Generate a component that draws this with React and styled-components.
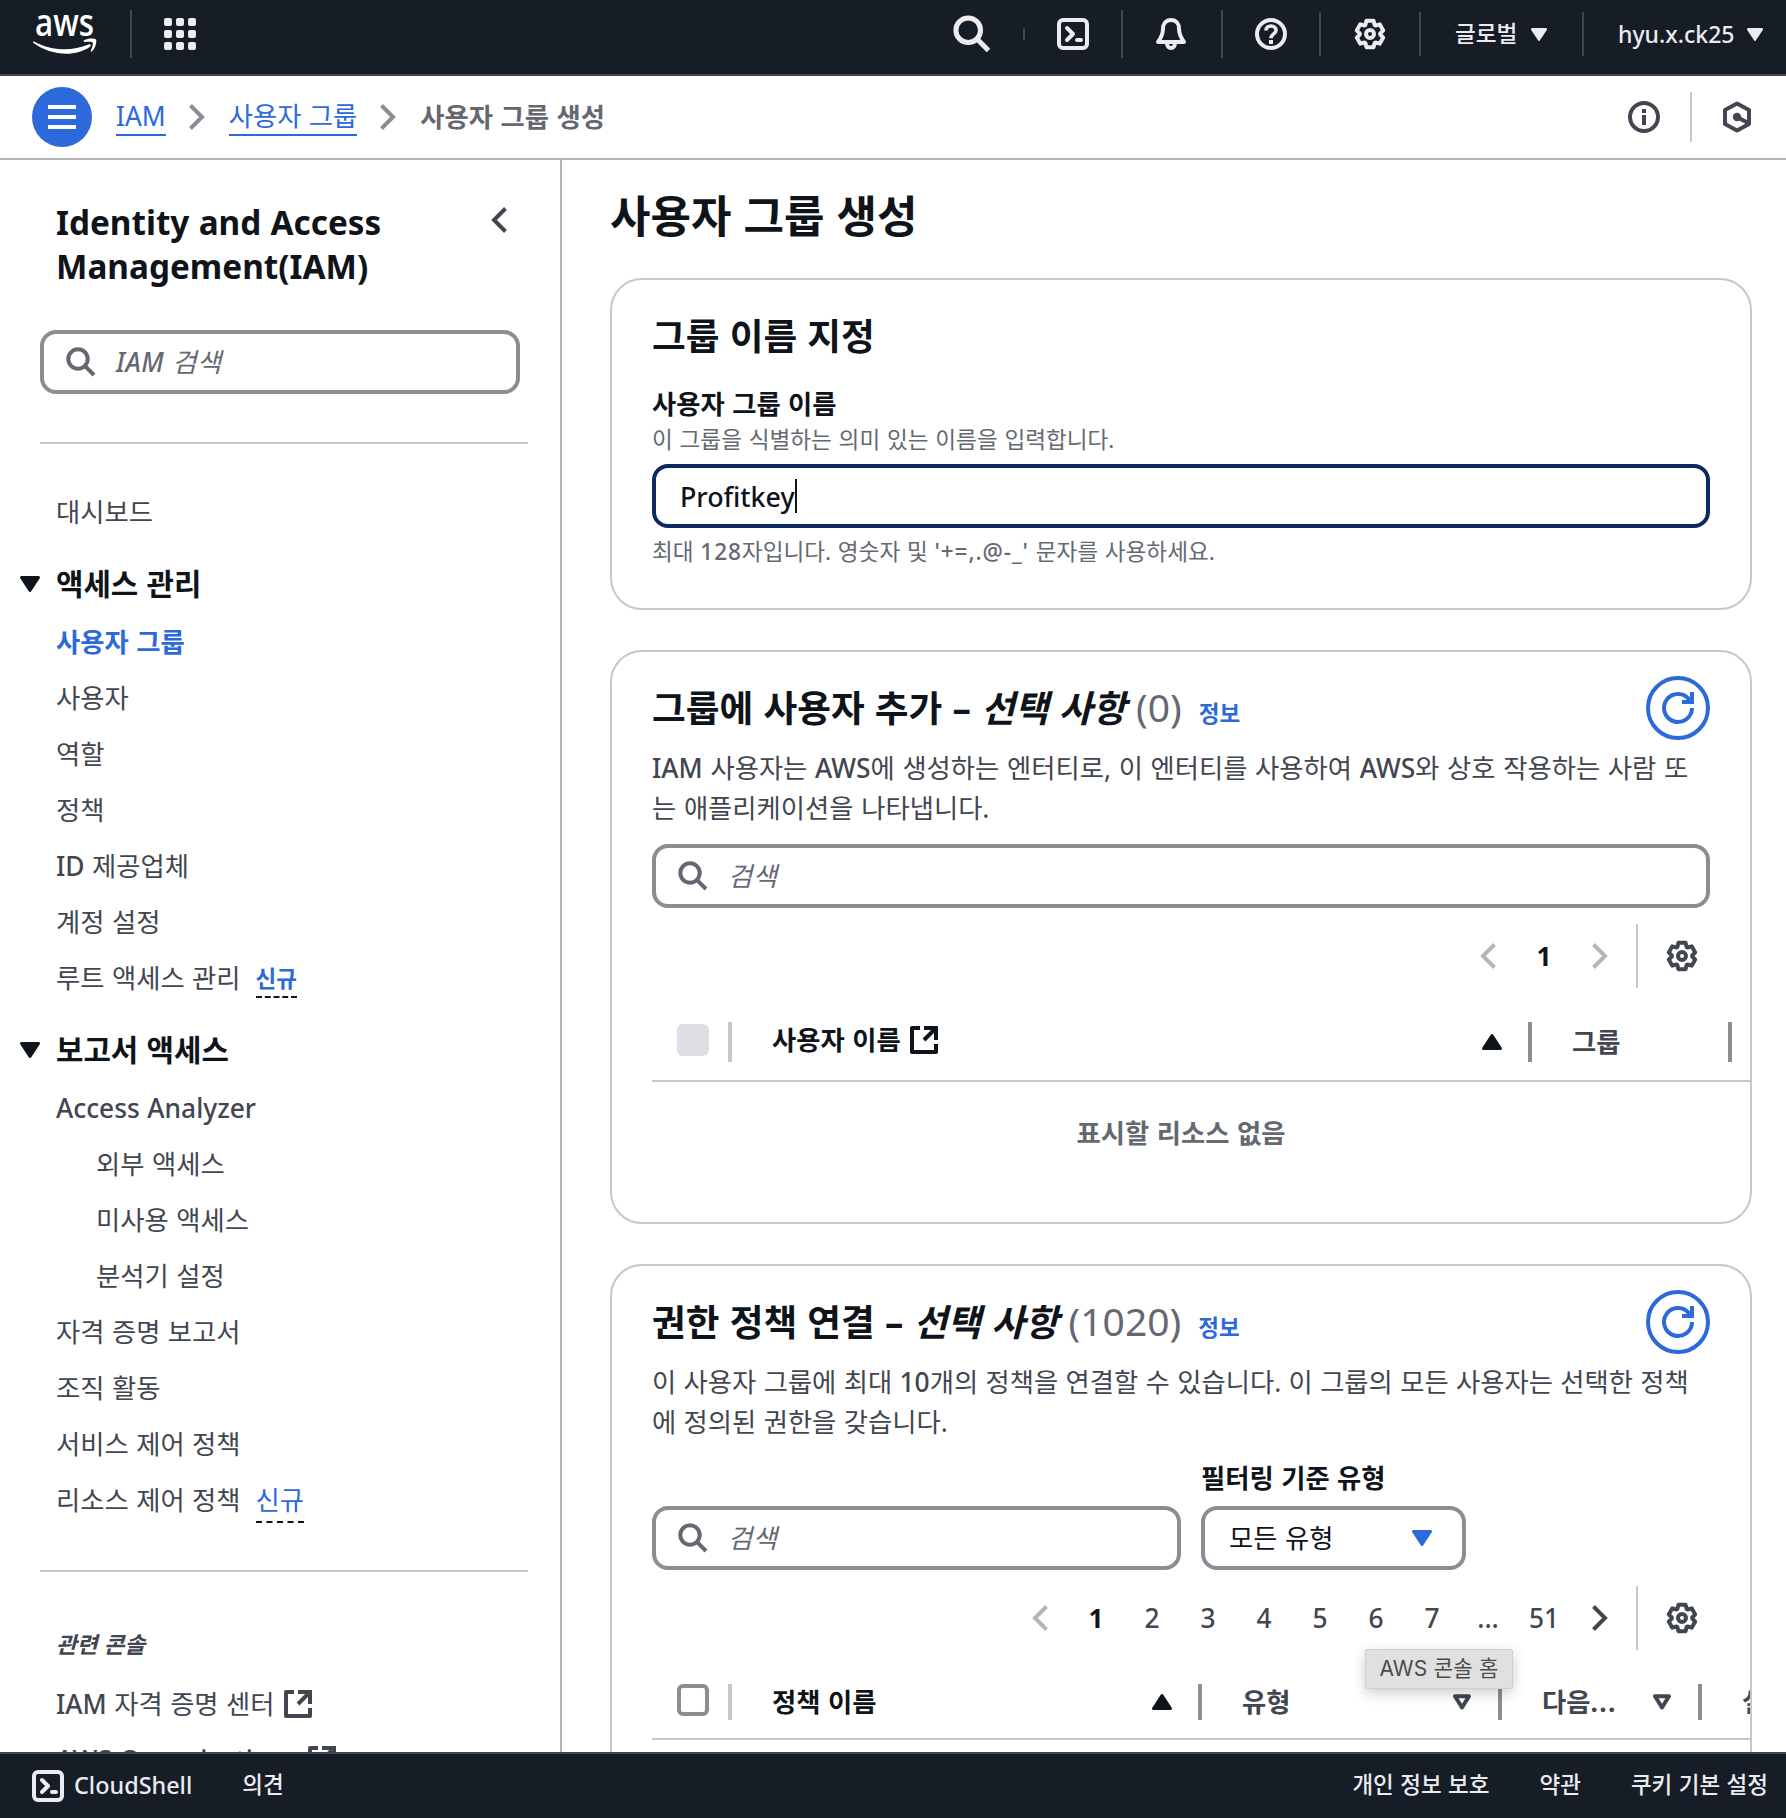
import React from "react";
import styled, { createGlobalStyle, css } from "styled-components";

const ink = "#0f141a";
const slate = "#424650";
const muted = "#656871";
const blue = "#2c69da";
const line = "#c6c6cd";
const control = "#8c8c94";
const dark = "#161d26";

const Global = createGlobalStyle`
  *, *::before, *::after { box-sizing: border-box; }
  html, body { margin: 0; padding: 0; }
  body {
    font-family: "Noto Sans", "Noto Sans CJK KR", sans-serif;
    font-size: 26.35px;
    line-height: 40px;
    word-spacing: 0.6px;
    color: ${slate};
    background: #fff;
  }
  h1, h2, p, ul { margin: 0; padding: 0; font-weight: inherit; font-size: inherit; }
  ul { list-style: none; }
  a { color: inherit; text-decoration: none; }
  svg { display: block; flex: none; overflow: visible; }
`;

/* ---------- icons ---------- */

const Svg = styled.svg.attrs((p) => ({
  viewBox: p.viewBox || "0 0 32 32",
  fill: "none",
  stroke: "currentColor",
  strokeWidth: p.strokeWidth || 4,
}))`
  width: ${(p) => p.$w || 32}px;
  height: ${(p) => p.$h || p.$w || 32}px;
`;

const gearPath = (() => {
  const pts = [];
  for (let i = 0; i < 6; i += 1) {
    [[-27, 10.2], [-15, 13.7], [15, 13.7], [27, 10.2]].forEach(([d, r]) => {
      const a = ((i * 60 + d - 90) * Math.PI) / 180;
      pts.push(`${(16 + r * Math.cos(a)).toFixed(2)} ${(16 + r * Math.sin(a)).toFixed(2)}`);
    });
  }
  return `M${pts.join("L")}Z`;
})();

const GearIcon = () => (
  <Svg strokeLinejoin="round">
    <path d={gearPath} />
    <circle cx="16" cy="16" r="4" />
  </Svg>
);
const SearchIcon = ({ size = 30 }) => (
  <Svg $w={size} viewBox="0 0 30 30" strokeWidth={4}>
    <circle cx="12" cy="12" r="9.7" />
    <path d="M18.6 18.6 28 28" />
  </Svg>
);
const ShellIcon = () => (
  <Svg strokeLinecap="round" strokeLinejoin="round">
    <rect x="2" y="2" width="28" height="28" rx="4" />
    <path d="M10 10l6 6-6 6M20 22h4" />
  </Svg>
);
const BellIcon = () => (
  <Svg strokeLinejoin="round">
    <path d="M16 2c-5.500 0-8 4.300-8 8.500 0 6-1.700 9-5 13.500h26c-3.300-4.500-5-7.500-5-13.500C24 6.300 21.500 2 16 2z" />
    <path d="M12 25c0 3 1.800 5 4 5s4-2 4-5" />
  </Svg>
);
const HelpIcon = () => (
  <Svg>
    <circle cx="16" cy="16" r="14" />
    <path d="M11 12.500C11 9.600 13.200 8 16 8s5 1.700 5 4.300c0 3.700-5 3.700-5 8" strokeWidth="3.600" />
    <path d="M14 24h4" />
  </Svg>
);
const InfoIcon = () => (
  <Svg>
    <circle cx="16" cy="16" r="14" />
    <path d="M16 14v10M16 8v4" />
  </Svg>
);
const HexIcon = () => (
  <Svg strokeLinejoin="round">
    <path d="M16 2.500 28 9v14l-12 6.500L4 23V9z" />
    <circle cx="16" cy="16" r="4.200" fill="currentColor" stroke="none" />
    <path d="M17 16.500 28 22.500" />
  </Svg>
);
const RefreshIcon = () => (
  <Svg>
    <path d="M30 16A14 14 0 1 1 27.500 8" />
    <path d="M30 0v10H20" />
  </Svg>
);
const ExternalIcon = () => (
  <Svg $w={28} viewBox="0 0 28 28">
    <path d="M10 2H2v24h24v-8" strokeLinejoin="round" />
    <path d="M14 2h12v12M26 2 14 14" />
  </Svg>
);
const Chevron = ({ dir }) => (
  <Svg $w={16} $h={26} viewBox="0 0 16 26">
    <path d={dir === "left" ? "M14.500 1.500 3 13l11.500 11.500" : "M1.500 1.500 13 13 1.500 24.500"} />
  </Svg>
);
const Triangle = ({ up, hollow, w = 20, h = 16 }) => (
  <Svg $w={w} $h={h} viewBox="0 0 20 16" strokeLinejoin="round" strokeWidth={hollow ? 4 : 3}>
    <path
      d={up ? "M10 1.500 18.500 14.500h-17z" : hollow ? "M10 13.500 3 2.200h14z" : "M10 14.500 1.500 1.500h17z"}
      fill={hollow ? "none" : "currentColor"}
    />
  </Svg>
);
const GridIcon = () => (
  <Svg>
    {[0, 12, 24].map((y) =>
      [0, 12, 24].map((x) => (
        <rect key={`${x}-${y}`} x={x} y={y} width="8" height="8" rx="2" fill="currentColor" stroke="none" />
      ))
    )}
  </Svg>
);
const LogoText = styled.text`
  font: 600 37px "Open Sans", sans-serif;
  fill: #fff;
  stroke: none;
`;
const AwsLogo = () => (
  <Svg $w={66} $h={54} viewBox="0 -12 66 54">
    <LogoText x="2" y="22" textLength="59" lengthAdjust="spacingAndGlyphs">aws</LogoText>
    <g fill="#fff" stroke="none">
      <path d="M1 27.500C17 36.500 38 38 55.500 30.500c2-.800 3.200 1 1.500 2.200C42 43.500 17 41.500.300 28.800c-.800-.900 0-1.700.700-1.300z" />
      <path d="M51 26.300c4-2.300 10.500-2.200 11.800-1 1.300 1.400.2 8.700-4 12.200-.7.500-1.400.2-1-.600 1-2.400 2.600-7.200 1.900-8.300-.800-1.100-5.500-.700-8-.500-.9 0-1.500-1-.7-1.800z" />
    </g>
  </Svg>
);

/* ---------- shell ---------- */

const Page = styled.div`
  display: flex;
  flex-direction: column;
  width: 1786px;
  height: 1818px;
  overflow: hidden;
`;

const TopBar = styled.header`
  display: flex;
  align-items: center;
  height: 76px;
  flex: none;
  padding: 0 23px 6px 33px;
  background: ${dark};
  border-bottom: 2px solid ${slate};
  color: #ebebf0;
`;
const LogoLink = styled.a`
  padding-bottom: 11px;
`;
const Gap = styled.div`
  width: ${(p) => p.$w}px;
  flex: none;
`;
const Spacer = styled.div`
  flex: 1;
`;
const Rule = styled.div`
  flex: none;
  width: 2px;
  height: ${(p) => p.$h}px;
  background: ${(p) => p.$c || slate};
`;
const TopSlot = styled.div`
  display: flex;
  justify-content: center;
  width: ${(p) => p.$w}px;
  padding-right: ${(p) => p.$r || 0}px;
`;
const TopMenu = styled.div`
  display: flex;
  align-items: center;
  justify-content: space-between;
  width: ${(p) => p.$w}px;
  margin-left: 34px;
  font-size: ${(p) => p.$fs}px;
  font-weight: 500;
  white-space: nowrap;
`;

const CrumbBar = styled.nav`
  display: flex;
  align-items: center;
  flex: none;
  height: 84px;
  padding: 0 33px 0 32px;
  border-bottom: 2px solid #b4b4bb;
  color: ${slate};
`;
const MenuButton = styled.div`
  display: flex;
  flex-direction: column;
  align-items: center;
  justify-content: center;
  gap: 6px;
  width: 60px;
  height: 60px;
  margin-right: 24px;
  border-radius: 50%;
  background: ${blue};
`;
const MenuLine = styled.span`
  width: 28px;
  height: 4px;
  background: #fff;
`;
const Crumb = styled.a`
  height: 36px;
  line-height: 33px;
  margin-top: 2px;
  border-bottom: 2px solid ${blue};
  color: ${blue};
`;
const CrumbSep = styled.span`
  margin: 0 24px 0 23px;
  color: ${control};
`;
const CrumbCurrent = styled.span`
  font-weight: 700;
  color: ${muted};
`;

const Body = styled.div`
  display: flex;
  flex: 1;
  min-height: 0;
`;

const Latin = styled.span`
  font-weight: 500;
`;

/* ---------- sidebar ---------- */

const Side = styled.aside`
  flex: none;
  width: 562px;
  height: 1592px;
  overflow: hidden;
  border-right: 2px solid #b4b4bb;
`;
const SideHead = styled.div`
  display: flex;
  justify-content: space-between;
  align-items: flex-start;
  padding: 40px 53px 0 56px;
`;
const SideTitle = styled.h2`
  width: 360px;
  font-size: 33.3px;
  font-weight: 700;
  line-height: 44px;
  color: ${ink};
`;
const SideCollapse = styled.span`
  padding-top: 7px;
`;
const Field = styled.div`
  display: flex;
  align-items: center;
  width: ${(p) => (p.$w ? `${p.$w}px` : "auto")};
  height: 64px;
  margin-top: ${(p) => (p.$mt || 0)}px;
  padding: ${(p) => (p.$text ? "1px 24px 0 24px" : "0 24px 0 22px")};
  border: 4px solid ${(p) => (p.$focus ? "#0b2a63" : control)};
  border-radius: 16px;
  color: ${(p) => (p.$text ? ink : muted)};
  font-size: ${(p) => (p.$text ? 26.8 : 26.35)}px;
  font-weight: ${(p) => (p.$text ? 500 : 400)};
`;
const Placeholder = styled.span`
  margin-left: 20px;
  font-style: italic;
  letter-spacing: 0.5px;
`;
const SideSearch = styled.div`
  width: 480px;
  margin: 42px 0 48px 40px;
`;
const SideRule = styled.div`
  width: 488px;
  height: 2px;
  margin: ${(p) => p.$mt || 0}px 0 ${(p) => p.$mb || 0}px 40px;
  background: ${line};
`;
const NavItem = styled.li`
  display: flex;
  align-items: center;
  height: 56px;
  padding-left: ${(p) => (p.$nested ? 96 : 56)}px;
  letter-spacing: ${(p) => p.$ls || 0}px;
  font-weight: ${(p) => (p.$active ? 700 : p.$latin ? 500 : 400)};
  white-space: pre;
  ${(p) => p.$active && css`color: ${blue};`}
`;
const NavGroup = styled.li`
  display: flex;
  align-items: center;
  gap: 16px;
  height: 56px;
  margin: 16px 0 2px;
  padding-left: 20px;
  font-size: 29.8px;
  font-weight: 700;
  color: ${ink};
`;
const Badge = styled.span`
  margin: ${(p) => (p.$small ? 3 : 5)}px 0 0 15px;
  padding-bottom: ${(p) => (p.$small ? 1 : 3)}px;
  font-size: ${(p) => (p.$small ? 22.5 : 26.35)}px;
  font-weight: ${(p) => (p.$small ? 700 : 400)};
  line-height: ${(p) => (p.$small ? 33 : 36)}px;
  border-bottom: 2px dashed ${ink};
  color: ${blue};
`;
const SideCaption = styled.div`
  margin: 45px 0 3px;
  padding-left: 56px;
  font-size: 22.5px;
  font-style: italic;
  font-weight: 700;
  line-height: 56px;
`;
const ExtSlot = styled.span`
  margin-left: 9px;
`;

/* ---------- main ---------- */

const Main = styled.main`
  position: relative;
  flex: 1;
  min-width: 0;
  height: 1592px;
  padding: 28px 34px 0 48px;
  overflow: hidden;
`;
const PageTitle = styled.h1`
  margin-bottom: 34px;
  font-size: 44px;
  font-weight: 700;
  line-height: 56px;
  color: ${ink};
`;
const Card = styled.section`
  margin-bottom: 40px;
  padding: ${(p) => p.$pad};
  height: ${(p) => (p.$h ? `${p.$h}px` : "auto")};
  border: 2px solid ${line};
  border-radius: 32px;
  overflow: hidden;
`;
const CardTitle = styled.h2`
  font-size: 36.7px;
  font-weight: 700;
  line-height: ${(p) => p.$lh || 62}px;
  color: ${ink};
  white-space: nowrap;
`;
const Counter = styled.span`
  margin-left: 10px;
  font-size: 39px;
  font-weight: 400;
  color: ${muted};
`;
const InfoLink = styled.a`
  margin-left: 17px;
  font-size: 22.5px;
  color: ${blue};
`;
const CardHead = styled.div`
  display: flex;
  justify-content: space-between;
  height: 66px;
`;
const RoundButton = styled.div`
  display: flex;
  align-items: center;
  justify-content: center;
  width: 64px;
  height: 64px;
  border: 4px solid ${blue};
  border-radius: 50%;
  color: ${blue};
`;
const Desc = styled.p`
  margin: 6px 0 16px;
  word-spacing: ${(p) => p.$ws}px;
  white-space: nowrap;
`;
const Label = styled.div`
  margin: ${(p) => p.$m || 0};
  font-weight: 700;
  color: ${ink};
`;
const Hint = styled.p`
  margin: ${(p) => p.$m || 0};
  font-size: 22.6px;
  line-height: 32px;
  word-spacing: 0.9px;
  color: ${muted};
`;
const Wide = styled.span`
  font-weight: 500;
  letter-spacing: 0.9px;
`;
const Caret = styled.span`
  width: 2px;
  height: 34px;
  margin-bottom: 2px;
  background: ${ink};
`;
const Filters = styled.div`
  display: flex;
  align-items: flex-end;
  gap: 20px;
`;
const SelectBox = styled.div`
  display: flex;
  align-items: center;
  justify-content: space-between;
  width: 265px;
  height: 64px;
  padding: 0 30px 0 24px;
  border: 4px solid ${control};
  border-radius: 16px;
  color: ${ink};
`;
const SelectArrow = styled.span`
  color: ${blue};
`;
const Pager = styled.div`
  display: flex;
  align-items: center;
  justify-content: flex-end;
  height: 64px;
  margin: 16px 0;
  padding-right: 12px;
`;
const PageBtn = styled.span`
  display: flex;
  justify-content: center;
  width: 56px;
  color: ${(p) => (p.$off ? "#b4b4bb" : p.$on ? ink : slate)};
  font-weight: ${(p) => (p.$on ? 700 : 500)};
`;
const PagerEnd = styled.span`
  display: flex;
  align-items: center;
  gap: 28px;
  margin-left: 8px;
`;
const HeadRow = styled.div`
  display: flex;
  align-items: center;
  height: ${(p) => p.$h + 2}px;
  margin-right: -40px;
  border-bottom: 2px solid ${line};
  overflow: hidden;
`;
const HeadCell = styled.div`
  display: flex;
  align-items: center;
  justify-content: space-between;
  flex: none;
  width: ${(p) => p.$w}px;
  height: ${(p) => p.$h}px;
  padding: 0 ${(p) => (p.$check ? "19px 0 25px" : "26px 0 40px")};
  border-right: 4px solid ${(p) => (p.$check ? line : p.$last ? "transparent" : control)};
  font-weight: 700;
  color: ${(p) => (p.$sorted ? ink : slate)};
  white-space: nowrap;
`;
const HeadLink = styled.span`
  display: flex;
  align-items: center;
  gap: 9px;
  padding-bottom: 4px;
`;
const Ellipsis = styled.span`
  letter-spacing: 1.4px;
`;
const Checkbox = styled.span`
  width: 32px;
  height: 32px;
  margin-bottom: 4px;
  border-radius: 6px;
  ${(p) => (p.$disabled ? css`background: #dedee3;` : css`border: 4px solid ${control};`)}
`;
const Empty = styled.div`
  padding: 31px 0 69px;
  text-align: center;
  font-weight: 700;
  color: ${muted};
`;
const Tooltip = styled.div`
  position: absolute;
  left: 803px;
  top: 1489px;
  width: 148px;
  height: 40px;
  line-height: 37px;
  border: 1px solid #d0d0d0;
  border-radius: 2px;
  background: #e0e0e0;
  box-shadow: 0 4px 14px rgba(0, 0, 0, 0.2);
  text-align: center;
  font-family: Inter, "Noto Sans CJK KR", sans-serif;
  font-size: 21.1px;
  color: #4b4b4b;
  white-space: nowrap;
`;

const Footer = styled.footer`
  display: flex;
  align-items: center;
  flex: none;
  height: 66px;
  padding: 0 18px 0 32px;
  border-top: 2px solid ${slate};
  background: ${dark};
  color: #ebebf0;
`;
const FooterText = styled.span`
  margin-left: ${(p) => p.$ml || 0}px;
  padding-bottom: ${(p) => p.$pb || 0}px;
  font-size: ${(p) => p.$fs || 22.5}px;
  font-weight: 500;
  white-space: nowrap;
`;

function Nav() {
  return (
    <Side>
      <SideHead>
        <SideTitle>Identity and Access Management(IAM)</SideTitle>
        <SideCollapse><Chevron dir="left" /></SideCollapse>
      </SideHead>
      <SideSearch>
        <Field><SearchIcon /><Placeholder><Latin>IAM</Latin> 검색</Placeholder></Field>
      </SideSearch>
      <SideRule $mb={40} />
      <ul>
        <NavItem>대시보드</NavItem>
        <NavGroup><Triangle />액세스 관리</NavGroup>
        <NavItem $active>사용자 그룹</NavItem>
        <NavItem>사용자</NavItem>
        <NavItem>역할</NavItem>
        <NavItem>정책</NavItem>
        <NavItem><span><Latin>ID</Latin> 제공업체</span></NavItem>
        <NavItem>계정 설정</NavItem>
        <NavItem>루트 액세스 관리<Badge $small>신규</Badge></NavItem>
        <NavGroup><Triangle />보고서 액세스</NavGroup>
        <NavItem $latin>Access Analyzer</NavItem>
        <NavItem $nested>외부 액세스</NavItem>
        <NavItem $nested>미사용 액세스</NavItem>
        <NavItem $nested>분석기 설정</NavItem>
        <NavItem>자격 증명 보고서</NavItem>
        <NavItem>조직 활동</NavItem>
        <NavItem>서비스 제어 정책</NavItem>
        <NavItem>리소스 제어 정책<Badge>신규</Badge></NavItem>
      </ul>
      <SideRule $mt={42} />
      <SideCaption>관련 콘솔</SideCaption>
      <ul>
        <NavItem><span><Latin>IAM</Latin> 자격 증명 센터</span><ExtSlot><ExternalIcon /></ExtSlot></NavItem>
        <NavItem $latin $ls={0.2}>AWS Organizations<ExtSlot><ExternalIcon /></ExtSlot></NavItem>
      </ul>
    </Side>
  );
}

export default function App() {
  return (
    <Page>
      <Global />
      <TopBar>
        <LogoLink><AwsLogo /></LogoLink>
        <Gap $w={31} />
        <Rule $h={48} />
        <Gap $w={32} />
        <GridIcon />
        <Spacer />
        <SearchIcon size={38} />
        <Gap $w={32} />
        <Rule $h={12} />
        <TopSlot $w={96}><ShellIcon /></TopSlot>
        <Rule $h={48} />
        <TopSlot $w={98} $r={2}><BellIcon /></TopSlot>
        <Rule $h={48} />
        <TopSlot $w={96}><HelpIcon /></TopSlot>
        <Rule $h={44} />
        <TopSlot $w={98}><GearIcon /></TopSlot>
        <Rule $h={44} />
        <TopMenu $w={92} $fs={22.6}>글로벌<Triangle w={16} h={13} /></TopMenu>
        <Gap $w={35} />
        <Rule $h={44} />
        <TopMenu $w={145} $fs={23}>hyu.x.ck25<Triangle w={16} h={13} /></TopMenu>
      </TopBar>
      <CrumbBar>
        <MenuButton><MenuLine /><MenuLine /><MenuLine /></MenuButton>
        <Crumb>IAM</Crumb>
        <CrumbSep><Chevron /></CrumbSep>
        <Crumb>사용자 그룹</Crumb>
        <CrumbSep><Chevron /></CrumbSep>
        <CrumbCurrent>사용자 그룹 생성</CrumbCurrent>
        <Spacer />
        <InfoIcon />
        <Gap $w={30} />
        <Rule $h={50} $c={line} />
        <Gap $w={29} />
        <HexIcon />
      </CrumbBar>
      <Body>
        <Nav />
        <Main>
          <PageTitle>사용자 그룹 생성</PageTitle>
          <Card $pad="34px 40px 40px">
            <CardTitle $lh={44}>그룹 이름 지정</CardTitle>
            <Label $m="26px 0 0">사용자 그룹 이름</Label>
            <Hint>이 그룹을 식별하는 의미 있는 이름을 입력합니다.</Hint>
            <Field $focus $text $mt={8}>Profitkey<Caret /></Field>
            <Hint $m="8px 0 0">최대 <Wide>128</Wide>자입니다. 영숫자 및 <Wide>'+=,.@-_'</Wide> 문자를 사용하세요.</Hint>
          </Card>

          <Card $pad="24px 40px 0">
            <CardHead>
              <CardTitle>그룹에 사용자 추가 – <em>선택 사항</em><Counter>(0)</Counter><InfoLink>정보</InfoLink></CardTitle>
              <RoundButton><RefreshIcon /></RoundButton>
            </CardHead>
            <Desc $ws={0.8}><Latin>IAM</Latin> 사용자는 <Latin>AWS</Latin>에 생성하는 엔터티로, 이 엔터티를 사용하여 <Latin>AWS</Latin>와 상호 작용하는 사람 또<br />는 애플리케이션을 나타냅니다.</Desc>
            <Field><SearchIcon /><Placeholder>검색</Placeholder></Field>
            <Pager>
              <PageBtn $off><Chevron dir="left" /></PageBtn>
              <PageBtn $on>1</PageBtn>
              <PageBtn $off><Chevron /></PageBtn>
              <PagerEnd><Rule $h={64} $c={line} /><GearIcon /></PagerEnd>
            </Pager>
            <HeadRow $h={76}>
              <HeadCell $check $w={80} $h={40}><Checkbox $disabled /></HeadCell>
              <HeadCell $sorted $w={800} $h={40}><HeadLink>사용자 이름<ExternalIcon /></HeadLink><Triangle up /></HeadCell>
              <HeadCell $w={200} $h={40}>그룹</HeadCell>
            </HeadRow>
            <Empty>표시할 리소스 없음</Empty>
          </Card>

          <Card $pad="24px 40px 0" $h={800}>
            <CardHead>
              <CardTitle>권한 정책 연결 – <em>선택 사항</em><Counter>(1020)</Counter><InfoLink>정보</InfoLink></CardTitle>
              <RoundButton><RefreshIcon /></RoundButton>
            </CardHead>
            <Desc $ws={0.5}>이 사용자 그룹에 최대 <Latin>10</Latin>개의 정책을 연결할 수 있습니다. 이 그룹의 모든 사용자는 선택한 정책<br />에 정의된 권한을 갖습니다.</Desc>
            <Filters>
              <Field $w={529}><SearchIcon /><Placeholder>검색</Placeholder></Field>
              <div>
                <Label $m="0 0 8px">필터링 기준 유형</Label>
                <SelectBox>모든 유형<SelectArrow><Triangle /></SelectArrow></SelectBox>
              </div>
            </Filters>
            <Pager>
              <PageBtn $off><Chevron dir="left" /></PageBtn>
              {["1", "2", "3", "4", "5", "6", "7", "...", "51"].map((n) => (
                <PageBtn key={n} $on={n === "1"}>{n}</PageBtn>
              ))}
              <PageBtn><Chevron /></PageBtn>
              <PagerEnd><Rule $h={64} $c={line} /><GearIcon /></PagerEnd>
            </Pager>
            <HeadRow $h={72}>
              <HeadCell $check $w={80} $h={36}><Checkbox /></HeadCell>
              <HeadCell $sorted $w={470} $h={36}>정책 이름<Triangle up /></HeadCell>
              <HeadCell $w={300} $h={36}>유형<Triangle hollow /></HeadCell>
              <HeadCell $w={200} $h={36}><span>다음<Ellipsis>...</Ellipsis></span><Triangle hollow /></HeadCell>
              <HeadCell $w={200} $h={36} $last>설명</HeadCell>
            </HeadRow>
          </Card>
          <Tooltip>AWS 콘솔 홈</Tooltip>
        </Main>
      </Body>
      <Footer>
        <ShellIcon />
        <FooterText $ml={10} $fs={23.4} $pb={2}>CloudShell</FooterText>
        <FooterText $ml={50} $pb={3}>의견</FooterText>
        <Spacer />
        <FooterText $pb={2}>개인 정보 보호</FooterText>
        <FooterText $ml={50} $pb={2}>약관</FooterText>
        <FooterText $ml={50} $pb={2}>쿠키 기본 설정</FooterText>
      </Footer>
    </Page>
  );
}
